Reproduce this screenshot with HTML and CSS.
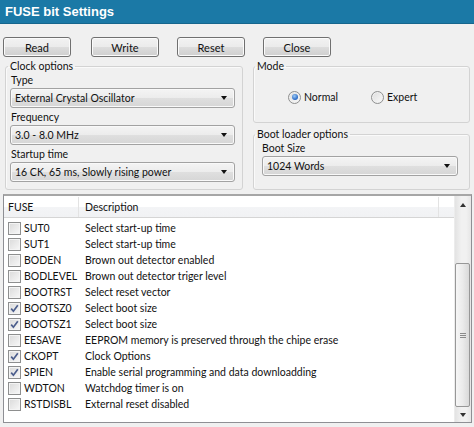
FILE: index.html
```html
<!DOCTYPE html>
<html>
<head>
<meta charset="utf-8">
<link rel="stylesheet" href="styles.css">
</head>
<body>
<div class="window">
  <div class="titlebar">FUSE bit Settings</div>
  <div class="toolbar">
    <button class="btn">Read</button>
    <button class="btn btn-shift">Write</button>
    <button class="btn">Reset</button>
    <button class="btn">Close</button>
  </div>
  <div class="options">
    <fieldset class="group clock">
      <legend>Clock options</legend>
      <div class="field">
        <div class="field-label">Type</div>
        <div class="select select-clock"><span>External Crystal Oscillator</span><i class="arrow"></i></div>
      </div>
      <div class="field">
        <div class="field-label">Frequency</div>
        <div class="select select-clock"><span>3.0 - 8.0 MHz</span><i class="arrow"></i></div>
      </div>
      <div class="field">
        <div class="field-label">Startup time</div>
        <div class="select select-clock"><span>16 CK, 65 ms, Slowly rising power</span><i class="arrow"></i></div>
      </div>
    </fieldset>
    <div class="rightcol">
      <fieldset class="group mode">
        <legend>Mode</legend>
        <div class="radios">
          <label class="radio-item"><span class="radio checked"></span>Normal</label>
          <label class="radio-item expert"><span class="radio"></span>Expert</label>
        </div>
      </fieldset>
      <fieldset class="group boot">
        <legend>Boot loader options</legend>
        <div class="field boot-field">
          <div class="field-label">Boot Size</div>
          <div class="select"><span>1024 Words</span><i class="arrow"></i></div>
        </div>
      </fieldset>
    </div>
  </div>
  <div class="list">
    <div class="table">
      <div class="thead">
        <div class="th th-fuse">FUSE</div>
        <div class="th th-desc">Description</div>
        <div class="th th-end"></div>
      </div>
      <div class="rows">
        <div class="row"><span class="cb"></span><span class="name">SUT0</span><span class="desc">Select start-up time</span></div>
        <div class="row"><span class="cb"></span><span class="name">SUT1</span><span class="desc">Select start-up time</span></div>
        <div class="row"><span class="cb"></span><span class="name">BODEN</span><span class="desc">Brown out detector enabled</span></div>
        <div class="row"><span class="cb"></span><span class="name">BODLEVEL</span><span class="desc">Brown out detector triger level</span></div>
        <div class="row"><span class="cb"></span><span class="name">BOOTRST</span><span class="desc">Select reset vector</span></div>
        <div class="row"><span class="cb on"><svg viewBox="0 0 11 11" width="11" height="11"><path d="M2.2 5.6 L4.4 8.2 L8.8 2.2" fill="none" stroke="#4b5d8c" stroke-width="1.7"/></svg></span><span class="name">BOOTSZ0</span><span class="desc">Select boot size</span></div>
        <div class="row"><span class="cb on"><svg viewBox="0 0 11 11" width="11" height="11"><path d="M2.2 5.6 L4.4 8.2 L8.8 2.2" fill="none" stroke="#4b5d8c" stroke-width="1.7"/></svg></span><span class="name">BOOTSZ1</span><span class="desc">Select boot size</span></div>
        <div class="row"><span class="cb"></span><span class="name">EESAVE</span><span class="desc">EEPROM memory is preserved through the chipe erase</span></div>
        <div class="row"><span class="cb on"><svg viewBox="0 0 11 11" width="11" height="11"><path d="M2.2 5.6 L4.4 8.2 L8.8 2.2" fill="none" stroke="#4b5d8c" stroke-width="1.7"/></svg></span><span class="name">CKOPT</span><span class="desc">Clock Options</span></div>
        <div class="row"><span class="cb on"><svg viewBox="0 0 11 11" width="11" height="11"><path d="M2.2 5.6 L4.4 8.2 L8.8 2.2" fill="none" stroke="#4b5d8c" stroke-width="1.7"/></svg></span><span class="name">SPIEN</span><span class="desc">Enable serial programming and data downloadding</span></div>
        <div class="row"><span class="cb"></span><span class="name">WDTON</span><span class="desc">Watchdog timer is on</span></div>
        <div class="row"><span class="cb"></span><span class="name">RSTDISBL</span><span class="desc">External reset disabled</span></div>
      </div>
    </div>
    <div class="scrollbar">
      <div class="sb-btn sb-up"><i class="tri-up"></i></div>
      <div class="sb-track-top"></div>
      <div class="sb-thumb"><span class="grip"></span></div>
      <div class="sb-track-bottom"></div>
      <div class="sb-btn sb-down"><i class="tri-down"></i></div>
    </div>
  </div>
</div>
</body>
</html>
```
FILE: styles.css
```css
* { box-sizing: border-box; }
html, body { margin: 0; padding: 0; }
body {
  width: 474px;
  height: 427px;
  overflow: hidden;
  background: #f0f0f0;
  font-family: Lato, "Liberation Sans", Arial, sans-serif;
  font-size: 10.5px;
  color: #111;
}
.window { width: 474px; height: 427px; display: flex; flex-direction: column; }

.titlebar {
  height: 24px;
  background: #1b79a6;
  border-bottom: 1px solid #16668d;
  color: #fff;
  font-family: "Liberation Sans", Arial, sans-serif;
  font-weight: bold;
  font-size: 13px;
  line-height: 23px;
  padding-left: 5px;
}

.toolbar {
  display: flex;
  gap: 18px;
  padding: 13px 0 0 3px;
}
.btn {
  width: 68px;
  height: 20px;
  margin: 0;
  padding: 0;
  border: 1px solid #707070;
  border-radius: 3px;
  background: linear-gradient(#f2f2f2 0%, #ebebeb 50%, #dddddd 51%, #cfcfcf 100%);
  box-shadow: inset 0 0 0 1px #fbfbfb;
  font-family: inherit;
  font-size: 11px;
  color: #111;
  line-height: 17px;
}
.btn-shift { margin-left: 2px; }

.options {
  display: flex;
  margin-top: 3px;
  padding-left: 5px;
}
.group {
  margin: 0;
  border: 1px solid #d3d3d3;
  border-radius: 3px;
  box-shadow: inset 1px 1px 0 #fafafa;
}
.group legend {
  padding: 0 2px;
  margin-left: 0;
  height: 12px;
  line-height: 12px;
}
.clock {
  width: 238px;
  padding: 0 7px 3px 2px;
}
.clock .field { margin-left: 2px; }
.field + .field { margin-top: 3px; }
.field-label {
  height: 12px;
  line-height: 12px;
  margin: 2px 0 2px 1px;
}
.select {
  height: 20px;
  border: 1px solid #a2a2a2;
  border-radius: 3px;
  background: linear-gradient(#f4f4f4 0%, #ececec 50%, #dfdfdf 51%, #d6d6d6 100%);
  box-shadow: inset 0 0 0 1px #f9f9f9;
  display: flex;
  align-items: center;
  justify-content: space-between;
  padding: 0 7px 0 4px;
  line-height: 18px;
}
.arrow {
  width: 0;
  height: 0;
  border-left: 3.5px solid transparent;
  border-right: 3.5px solid transparent;
  border-top: 4px solid #111;
}

.rightcol {
  width: 217px;
  margin-left: 10px;
  display: flex;
  flex-direction: column;
}
.mode {
  padding: 18px 0 18px 1px;
}
.radios {
  display: flex;
  height: 14px;
  align-items: center;
  margin-left: 33px;
}
.radio-item {
  display: flex;
  align-items: center;
  gap: 3px;
  line-height: 14px;
}
.radio-item.expert { margin-left: 33px; }
.radio {
  width: 13px;
  height: 13px;
  border-radius: 50%;
  border: 1px solid #8e8f8f;
  background: linear-gradient(135deg, #dcdcdc, #fbfbfb);
  box-shadow: inset 0 0 0 1px #f0f0f0;
  position: relative;
}
.radio.checked::after {
  content: "";
  position: absolute;
  left: 2.5px;
  top: 2.5px;
  width: 6px;
  height: 6px;
  border-radius: 50%;
  background: radial-gradient(circle at 40% 35%, #9ccaf5, #2767c4 70%);
}
.boot {
  margin-top: 5px;
  padding: 0 11px 13px 1px;
}
.boot-field { margin-left: 7px; }
.boot .field-label { margin-left: 0; }

.list {
  margin: 4px 2px 0 3px;
  height: 229px;
  border: 1px solid #8e8f94;
  border-top: 2px solid #a6a6a6;
  background: #fff;
  display: flex;
}
.table { flex: 1; display: flex; flex-direction: column; }
.thead {
  margin-top: 1px;
  height: 21px;
  display: flex;
  background: linear-gradient(#ffffff 0%, #ffffff 50%, #f3f4f6 51%, #f1f2f4 100%);
  border-bottom: 1px solid #d5d5d5;
}
.th {
  line-height: 20px;
  border-right: 1px solid #e3e3e3;
}
.th-fuse { width: 75px; padding-left: 4px; }
.th-desc { width: 360px; padding-left: 6px; }
.th-end { flex: 1; border-right: none; }
.rows { padding-top: 2px; }
.row {
  height: 16px;
  display: flex;
  align-items: center;
  padding-left: 4px;
}
.cb {
  width: 13px;
  height: 13px;
  border: 1px solid #8e8f8f;
  background: linear-gradient(135deg, #dadada, #f8f8f8);
  box-shadow: inset 0 0 0 1px #f4f4f4;
  display: flex;
  align-items: center;
  justify-content: center;
  flex: none;
}
.cb svg { display: block; }
.name { width: 61px; margin-left: 3px; flex: none; white-space: nowrap; }
.desc { white-space: nowrap; }

.scrollbar {
  width: 17px;
  display: flex;
  flex-direction: column;
  background: linear-gradient(90deg, #e3e3e3, #f1f1f1 40%, #f1f1f1 70%, #e6e6e6);
  border-left: 1px solid #ececec;
}
.sb-btn {
  display: flex;
  align-items: center;
  justify-content: center;
}
.sb-up { height: 18px; }
.sb-down { height: 15px; }
.sb-track-top { height: 49px; }
.sb-track-bottom { flex: 1; }
.sb-thumb {
  height: 144px;
  margin: 0 1px 0 0;
  border: 1px solid #979797;
  border-radius: 2px;
  background: linear-gradient(90deg, #f6f6f6, #ebebeb 50%, #d9d9d9);
  display: flex;
  align-items: center;
  justify-content: center;
}
.grip {
  width: 6px;
  height: 5px;
  border-top: 1px solid #8a8a8a;
  border-bottom: 1px solid #8a8a8a;
  position: relative;
}
.grip::after {
  content: "";
  position: absolute;
  left: 0;
  right: 0;
  top: 1px;
  border-top: 1px solid #8a8a8a;
}
.tri-up {
  width: 0; height: 0;
  border-left: 3.5px solid transparent;
  border-right: 3.5px solid transparent;
  border-bottom: 4px solid #333;
}
.tri-down {
  width: 0; height: 0;
  border-left: 3.5px solid transparent;
  border-right: 3.5px solid transparent;
  border-top: 4px solid #333;
}
```
